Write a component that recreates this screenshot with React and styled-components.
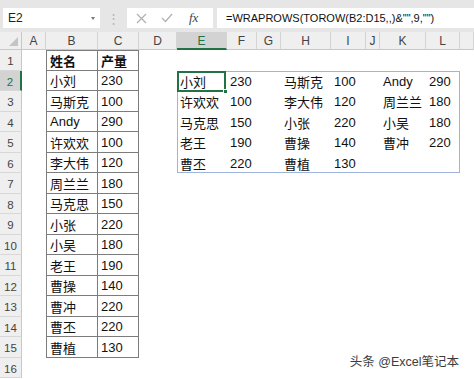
import React from "react";
import styled, { createGlobalStyle, css } from "styled-components";

const Global = createGlobalStyle`
  html, body { margin: 0; padding: 0; background: #fff; }
  body { width: 474px; height: 379px; overflow: hidden; font-family: "Liberation Sans", "Noto Sans CJK SC", sans-serif; }
  * { box-sizing: border-box; }
`;

const GREEN = "#217346";
const COL_W = [22, 24, 52, 41, 38, 50, 30, 24, 50, 35, 14, 46, 34];
const LETTERS = ["", "A", "B", "C", "D", "E", "F", "G", "H", "I", "J", "K", "L", ""];
const ROW_H = Array.from({ length: 16 }, (_, i) => (i % 2 === 0 ? 21 : 20));

const Page = styled.div`
  position: relative;
  width: 474px;
  height: 379px;
  overflow: hidden;
  background: #fff;
`;

const FormulaBar = styled.div`
  display: flex;
  align-items: center;
  height: 32px;
  padding: 4px 0 0 3px;
  background: #e6e6e6;
`;

const NameBox = styled.div`
  position: relative;
  display: flex;
  align-items: center;
  width: 97px;
  height: 20px;
  padding-left: 5px;
  background: #fff;
  font-size: 12px;
  color: #222;
`;

const Caret = styled.span`
  position: absolute;
  right: 5px;
  top: 9px;
  width: 0;
  height: 0;
  border-left: 2.5px solid transparent;
  border-right: 2.5px solid transparent;
  border-top: 3px solid #777;
`;

const Splitter = styled.div`
  width: 27px;
  display: flex;
  justify-content: center;
  color: #b5b5b5;
  font-size: 13px;
  line-height: 1;
`;

const FxBox = styled.div`
  display: flex;
  align-items: center;
  width: 86px;
  height: 20px;
  margin-right: 4px;
  padding-left: 9px;
  gap: 14px;
  background: #fff;
`;

const Fx = styled.span`
  font-family: "Liberation Serif", serif;
  font-style: italic;
  font-size: 13px;
  color: #444;
  margin-left: 2px;
`;

const FormulaInput = styled.div`
  flex: 1;
  display: flex;
  align-items: center;
  height: 20px;
  padding-left: 9px;
  background: #fff;
  font-size: 11px;
  color: #111;
  white-space: nowrap;
  overflow: hidden;
`;

const Sheet = styled.div`
  position: relative;
  display: grid;
  grid-template-columns: ${COL_W.map((w) => w + "px").join(" ")} 1fr;
  grid-template-rows: 18px ${ROW_H.map((h) => h + "px").join(" ")};
  background: #fff;
`;

const ColHead = styled.div`
  display: flex;
  align-items: center;
  justify-content: center;
  background: ${(p) => (p.$active ? "#d3d3d3" : "#efefef")};
  border-right: 1px solid #d4d4d4;
  border-bottom: ${(p) => (p.$active ? `2px solid ${GREEN}` : "1px solid #c8c8c8")};
  color: ${(p) => (p.$active ? GREEN : "#444")};
  font-size: 12px;
  padding-top: ${(p) => (p.$active ? "1px" : "0")};
`;

const Corner = styled.div`
  position: relative;
  background: #efefef;
  border-right: 1px solid #c8c8c8;
  border-bottom: 1px solid #c8c8c8;
`;

const SelectAll = styled.span`
  position: absolute;
  right: 3px;
  bottom: 3px;
  width: 0;
  height: 0;
  border-left: 9px solid transparent;
  border-bottom: 9px solid #c4c4c4;
`;

const RowHead = styled.div`
  display: flex;
  align-items: center;
  justify-content: center;
  background: ${(p) => (p.$active ? "#d3d3d3" : "#efefef")};
  border-bottom: 1px solid #d8d8d8;
  border-right: ${(p) => (p.$active ? `2px solid ${GREEN}` : "1px solid #c8c8c8")};
  color: ${(p) => (p.$active ? GREEN : "#444")};
  font-size: 11.5px;
  padding-top: 2px;
`;

const Cell = styled.div`
  display: flex;
  align-items: center;
  padding-left: 3px;
  font-size: 13px;
  color: #111;
  white-space: nowrap;
  overflow: visible;
  font-weight: ${(p) => (p.$bold ? 700 : 400)};
  ${(p) =>
    p.$table &&
    css`
      border-right: 1px solid #7c7c7c;
      border-bottom: 1px solid #7c7c7c;
    `}
  ${(p) => p.$top && css`border-top: 1px solid #7c7c7c;`}
  ${(p) => p.$left && css`border-left: 1px solid #7c7c7c;`}
`;

const SpillFrame = styled.div`
  position: absolute;
  grid-column: 6 / 14;
  grid-row: 3 / 8;
  top: 0;
  left: 0;
  right: 0;
  bottom: 0;
  border: 1px solid #9fb4dc;
  pointer-events: none;
`;

const Selection = styled.div`
  position: absolute;
  grid-column: 6 / 7;
  grid-row: 3 / 4;
  top: 0;
  left: 0;
  right: 1px;
  bottom: -1px;
  border: 2px solid ${GREEN};
  pointer-events: none;
`;

const FillHandle = styled.span`
  position: absolute;
  right: -4px;
  bottom: -4px;
  width: 5px;
  height: 5px;
  background: ${GREEN};
  border: 1px solid #fff;
`;

const Watermark = styled.div`
  position: absolute;
  right: 15px;
  bottom: 9px;
  font-size: 12.5px;
  color: #3c3c3c;
  text-shadow: 0 0 2px #fff, 0 0 2px #fff;
  font-family: "Liberation Sans", "Noto Sans CJK SC", sans-serif;
`;

const people = [
  ["小刘", "230"], ["马斯克", "100"], ["Andy", "290"], ["许欢欢", "100"],
  ["李大伟", "120"], ["周兰兰", "180"], ["马克思", "150"], ["小张", "220"],
  ["小吴", "180"], ["老王", "190"], ["曹操", "140"], ["曹冲", "220"],
  ["曹丕", "220"], ["曹植", "130"],
];

const spill = [];
for (let i = 0; i < people.length; i += 3) {
  const row = [];
  for (let k = 0; k < 3; k++) {
    const p = people[i + k];
    row.push(p ? p[0] : "", p ? p[1] : "", "");
  }
  spill.push(row.slice(0, 8));
}

function XIcon() {
  return (
    <svg width="11" height="11" viewBox="0 0 11 11">
      <path d="M1 1 L10 10 M10 1 L1 10" stroke="#b0b0b0" strokeWidth="1.2" fill="none" />
    </svg>
  );
}

function CheckIcon() {
  return (
    <svg width="12" height="10" viewBox="0 0 12 10">
      <path d="M1 5 L4.5 8.5 L11 1" stroke="#b0b0b0" strokeWidth="1.2" fill="none" />
    </svg>
  );
}

export default function App() {
  const cells = [];
  LETTERS.forEach((l, c) => {
    if (c === 0)
      cells.push(
        <Corner key="corner">
          <SelectAll />
        </Corner>
      );
    else cells.push(<ColHead key={"h" + c} $active={l === "E"}>{l}</ColHead>);
  });
  for (let r = 1; r <= 16; r++) {
    for (let c = 0; c < LETTERS.length; c++) {
      const key = r + "-" + c;
      if (c === 0) {
        cells.push(<RowHead key={key} $active={r === 2}>{r}</RowHead>);
        continue;
      }
      let text = "";
      let table = false;
      let bold = false;
      if (r <= 15 && (c === 2 || c === 3)) {
        table = true;
        if (r === 1) {
          text = c === 2 ? "姓名" : "产量";
          bold = true;
        } else {
          text = people[r - 2][c - 2];
        }
      }
      if (r >= 2 && r <= 6 && c >= 5 && c <= 12) {
        text = spill[r - 2][c - 5];
      }
      cells.push(
        <Cell key={key} $table={table} $top={table && r === 1} $left={table && c === 2} $bold={bold}>
          {text}
        </Cell>
      );
    }
  }

  return (
    <Page>
      <Global />
      <FormulaBar>
        <NameBox>
          E2
          <Caret />
        </NameBox>
        <Splitter>⋮</Splitter>
        <FxBox>
          <XIcon />
          <CheckIcon />
          <Fx>fx</Fx>
        </FxBox>
        <FormulaInput>=WRAPROWS(TOROW(B2:D15,,)&amp;"",9,"")</FormulaInput>
      </FormulaBar>
      <Sheet>
        {cells}
        <SpillFrame />
        <Selection>
          <FillHandle />
        </Selection>
      </Sheet>
      <Watermark>头条 @Excel笔记本</Watermark>
    </Page>
  );
}
